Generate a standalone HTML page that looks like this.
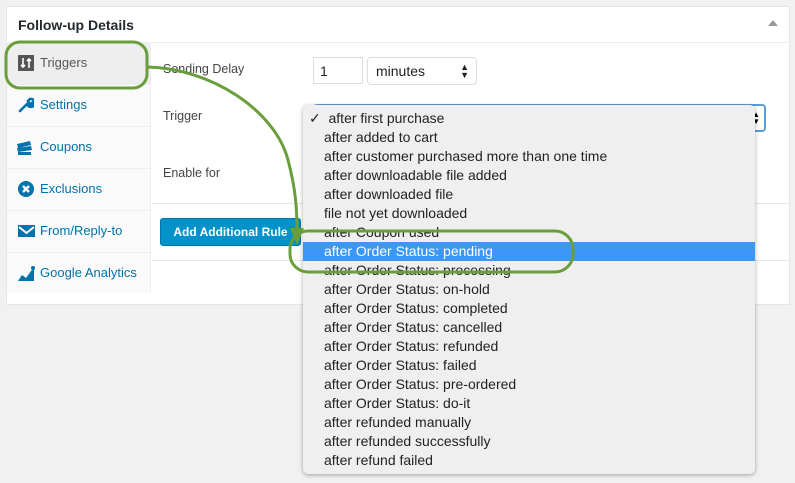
<!DOCTYPE html>
<html><head><style>
*{margin:0;padding:0;box-sizing:border-box}
body{width:795px;height:483px;background:#f1f1f1;font-family:"Liberation Sans",sans-serif;position:relative;overflow:hidden}
.abs{position:absolute}
.panel{left:6px;top:6px;width:784px;height:299px;background:#fff;border:1px solid #e5e5e5}
.hdr{left:6px;top:6px;width:784px;height:37px;border-bottom:1px solid #eee;font-weight:bold;font-size:14px;color:#23282d;padding:11px 12px}
.side{left:7px;top:43px;width:144px;height:250px;background:#fafafa;border-right:1px solid #eee}
.tab{position:absolute;left:0;width:144px;height:42px;border-bottom:1px solid #eee;color:#0073aa;font-size:13px;padding-left:33px;line-height:40px}
.tab svg{position:absolute;left:11px;top:12px}
.lbl{font-size:12.5px;color:#444}
.dd{left:303px;top:105px;width:452px;height:369px;background:#efefef;border-radius:5px;box-shadow:0 1px 4px rgba(0,0,0,.35);font-size:14px;color:#222}
.dd div{height:19px;line-height:19px;padding-left:21px;white-space:nowrap}
.dd .hl{background:#3d97f7;color:#fff}
</style></head><body>
<div class="abs panel"></div>
<div class="abs hdr">Follow-up Details</div>
<div class="abs" style="left:768px;top:20px;width:0;height:0;border-left:5px solid transparent;border-right:5px solid transparent;border-bottom:6px solid #999"></div>
<div class="abs side">
 <div class="tab" style="top:0;background:#eee;color:#555"><svg width="16" height="16"><rect width="16" height="16" fill="#555"/><path d="M5 3v9M3 10l2 2 2-2M11 13V4M9 6l2-2 2 2" stroke="#fff" stroke-width="1.6" fill="none"/></svg>Triggers</div>
 <div class="tab" style="top:42px"><svg width="16" height="16"><path d="M2 14l7-7M9 7a4 4 0 1 0 3-5l-2 2 1 2 2 1 2-2a4 4 0 0 1-5 3" stroke="#0073aa" stroke-width="2.6" fill="none" stroke-linecap="round"/></svg>Settings</div>
 <div class="tab" style="top:84px"><svg width="18" height="16" style="left:9px"><path d="M1 5l13-3 1 4-13 3zM1 9l14-2 1 4-14 2zM2 13h13v3H2z" fill="#0073aa"/></svg>Coupons</div>
 <div class="tab" style="top:126px"><svg width="16" height="16"><circle cx="8" cy="8" r="8" fill="#0073aa"/><path d="M5 5l6 6M11 5l-6 6" stroke="#fff" stroke-width="2.4"/></svg>Exclusions</div>
 <div class="tab" style="top:168px"><svg width="17" height="16"><rect y="2" width="17" height="12" fill="#0073aa"/><path d="M1 4l7.5 6L16 4" stroke="#fff" stroke-width="2" fill="none"/></svg>From/Reply-to</div>
 <div class="tab" style="top:210px;border:none"><svg width="17" height="16"><path d="M0 16l4-6 4 3 5-7 3-3v13z" fill="#0073aa"/><circle cx="15" cy="3" r="2" fill="#0073aa"/></svg>Google Analytics</div>
</div>
<div class="abs lbl" style="left:163px;top:62px">Sending Delay</div>
<div class="abs lbl" style="left:163px;top:109px">Trigger</div>
<div class="abs lbl" style="left:163px;top:166px">Enable for</div>
<div class="abs" style="left:152px;top:203px;width:637px;height:1px;background:#e5e5e5"></div>
<div class="abs" style="left:152px;top:260px;width:637px;height:1px;background:#e5e5e5"></div>
<div class="abs" style="left:313px;top:57px;width:50px;height:27px;border:1px solid #ddd;font-size:14px;padding:5px 6px;color:#222">1</div>
<div class="abs" style="left:367px;top:57px;width:110px;height:28px;border:1px solid #ddd;border-radius:4px;font-size:14px;padding:5px 8px;color:#222">minutes<span style="position:absolute;right:7px;top:5px;font-size:9px;line-height:8px">▲<br>▼</span></div>
<div class="abs" style="left:160px;top:218px;width:141px;height:28px;background:#0092c8;border:1px solid #0073aa;border-radius:3px;color:#fff;font-size:12px;font-weight:bold;text-align:center;line-height:26px;white-space:nowrap">Add Additional Rule</div>
<div class="abs" style="left:313px;top:104px;width:453px;height:28px;border:2px solid #5b9dd9;border-radius:4px;background:#fff"><span style="position:absolute;right:4px;top:5px;font-size:8px;line-height:7px">▲<br>▼</span></div>
<div class="abs dd" style="padding-top:4px">
<div style="padding-left:6px">✓&nbsp;&nbsp;after first purchase</div>
<div>after added to cart</div>
<div>after customer purchased more than one time</div>
<div>after downloadable file added</div>
<div>after downloaded file</div>
<div>file not yet downloaded</div>
<div>after Coupon used</div>
<div class="hl">after Order Status: pending</div>
<div>after Order Status: processing</div>
<div>after Order Status: on-hold</div>
<div>after Order Status: completed</div>
<div>after Order Status: cancelled</div>
<div>after Order Status: refunded</div>
<div>after Order Status: failed</div>
<div>after Order Status: pre-ordered</div>
<div>after Order Status: do-it</div>
<div>after refunded manually</div>
<div>after refunded successfully</div>
<div>after refund failed</div>
</div>
<svg class="abs" style="left:0;top:0" width="795" height="483">
<g stroke="#6a9e3a" stroke-width="3" fill="none">
<rect x="6" y="42" width="141" height="46" rx="14"/>
<path d="M147 67C210 68 275 110 288 160C296 190 297 210 297 232"/>
<rect x="290" y="231" width="283" height="41" rx="18"/>
</g>
<path d="M290 228L304 228L297 245Z" fill="#6a9e3a"/>
</svg>
</body></html>
